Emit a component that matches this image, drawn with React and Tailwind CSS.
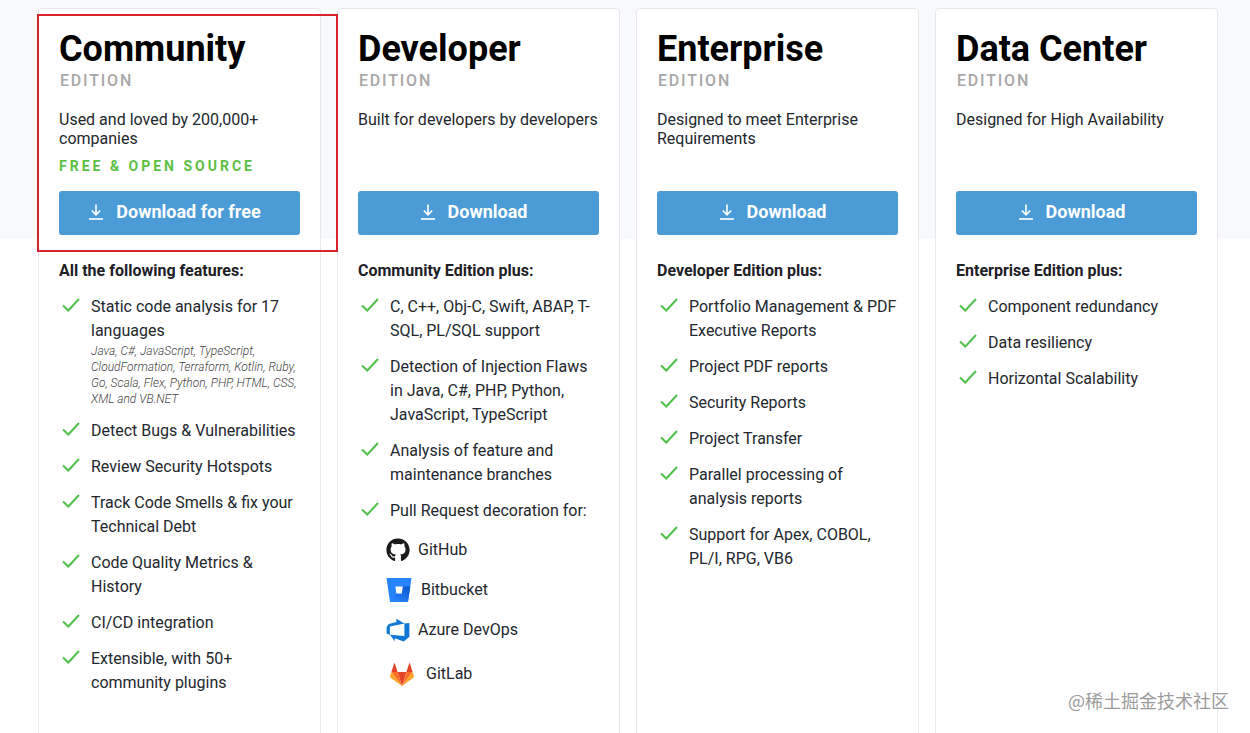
import React from 'react';
import { FaGithub } from 'react-icons/fa';
import { VscAzureDevops } from 'react-icons/vsc';

const CheckIcon = () => (
  <svg viewBox="0 0 18 14" className="absolute left-[3px] top-[3px] w-[18px] h-[14px]" fill="none">
    <path d="M1 7.5 L6.3 12.5 L17 1" stroke="#4fc04a" strokeWidth="2" />
  </svg>
);

const DownloadIcon = () => (
  <svg viewBox="0 0 16 16" className="w-[16px] h-[16px]" fill="none" stroke="#fff" strokeWidth="1.6">
    <path d="M8 0.5 V10.5 M3.8 6.5 L8 10.8 L12.2 6.5" />
    <path d="M1 15 H15" />
  </svg>
);

const BitbucketLogo = () => (
  <svg viewBox="0 0 26 24" className="w-[26px] h-[24px]">
    <defs>
      <linearGradient id="bb" x1="1" y1="0" x2="0.3" y2="1">
        <stop offset="0" stopColor="#0a52cc" />
        <stop offset="1" stopColor="#2684ff" />
      </linearGradient>
    </defs>
    <path d="M0.5 0 H25.5 L22 24 H4 Z" fill="#2684ff" />
    <path d="M24.3 8.5 H16.8 L15.6 16 H10.3 L4.2 23.6 H22 Z" fill="url(#bb)" />
    <path d="M9.3 8.5 H16.8 L15.8 15.5 H10.4 Z" fill="#fff" />
  </svg>
);

const GitlabLogo = () => (
  <svg viewBox="0 0 24 23" className="w-[24px] h-[23px]">
    <path d="M12 23 L16.4 9 H7.6 Z" fill="#e24329" />
    <path d="M12 23 L7.6 9 H1.4 Z" fill="#fc6d26" />
    <path d="M1.4 9 L0.1 13.2 C-0.1 13.8 0.1 14.4 0.6 14.7 L12 23 Z" fill="#fca326" />
    <path d="M1.4 9 H7.6 L4.9 0.6 C4.8 0.2 4.2 0.2 4.1 0.6 Z" fill="#e24329" />
    <path d="M12 23 L16.4 9 H22.6 Z" fill="#fc6d26" />
    <path d="M22.6 9 L23.9 13.2 C24.1 13.8 23.9 14.4 23.4 14.7 L12 23 Z" fill="#fca326" />
    <path d="M22.6 9 H16.4 L19.1 0.6 C19.2 0.2 19.8 0.2 19.9 0.6 Z" fill="#e24329" />
  </svg>
);

const Feature = ({ children, note }) => (
  <li className="relative pl-[32px]">
    <CheckIcon />
    {children}
    {note && (
      <p className="italic font-light text-[12px] leading-[16px] text-[#444] -mr-[4px]">{note}</p>
    )}
  </li>
);

const editions = [
  {
    name: 'Community',
    desc: 'Used and loved by 200,000+ companies',
    free: true,
    button: 'Download for free',
    plus: 'All the following features:',
    features: [
      {
        text: 'Static code analysis for 17 languages',
        note: 'Java, C#, JavaScript, TypeScript, CloudFormation, Terraform, Kotlin, Ruby, Go, Scala, Flex, Python, PHP, HTML, CSS, XML and VB.NET',
      },
      { text: 'Detect Bugs & Vulnerabilities' },
      { text: 'Review Security Hotspots' },
      { text: 'Track Code Smells & fix your Technical Debt' },
      { text: 'Code Quality Metrics & History' },
      { text: 'CI/CD integration' },
      { text: 'Extensible, with 50+ community plugins' },
    ],
  },
  {
    name: 'Developer',
    desc: 'Built for developers by developers',
    button: 'Download',
    plus: 'Community Edition plus:',
    features: [
      { text: 'C, C++, Obj-C, Swift, ABAP, T-SQL, PL/SQL support' },
      { text: 'Detection of Injection Flaws in Java, C#, PHP, Python, JavaScript, TypeScript' },
      { text: 'Analysis of feature and maintenance branches' },
      { text: 'Pull Request decoration for:' },
    ],
    integrations: true,
  },
  {
    name: 'Enterprise',
    desc: 'Designed to meet Enterprise Requirements',
    button: 'Download',
    plus: 'Developer Edition plus:',
    features: [
      { text: 'Portfolio Management & PDF Executive Reports' },
      { text: 'Project PDF reports' },
      { text: 'Security Reports' },
      { text: 'Project Transfer' },
      { text: 'Parallel processing of analysis reports' },
      { text: 'Support for Apex, COBOL, PL/I, RPG, VB6' },
    ],
  },
  {
    name: 'Data Center',
    desc: 'Designed for High Availability',
    button: 'Download',
    plus: 'Enterprise Edition plus:',
    features: [
      { text: 'Component redundancy' },
      { text: 'Data resiliency' },
      { text: 'Horizontal Scalability' },
    ],
  },
];

const Integrations = () => (
  <div className="text-[16px] leading-[24px]">
    <div className="flex items-center h-[24px] mt-[15px] ml-[28px]">
      <FaGithub className="w-[24px] h-[24px] text-[#1b1b1b]" />
      <span className="ml-[8px]">GitHub</span>
    </div>
    <div className="flex items-center h-[24px] mt-[16px] ml-[28px]">
      <BitbucketLogo />
      <span className="ml-[9px]">Bitbucket</span>
    </div>
    <div className="flex items-center h-[24px] mt-[16px] ml-[27px]">
      <VscAzureDevops className="w-[26px] h-[26px] text-[#0f78d4]" />
      <span className="ml-[7px]">Azure DevOps</span>
    </div>
    <div className="flex items-center h-[24px] mt-[20px] ml-[32px]">
      <GitlabLogo />
      <span className="ml-[12px]">GitLab</span>
    </div>
  </div>
);

const EditionCard = ({ edition }) => (
  <div className="w-[283px] h-[900px] shrink-0 bg-white border border-[#e6e8ee] rounded-[4px] px-[20px] pt-[20px] text-[#23272e]">
    <h2 className="text-[36px] leading-[40px] font-bold text-black">{edition.name}</h2>
    <div className="ml-[1px] text-[16px] leading-[24px] font-medium tracking-[1.8px] text-[#a8a8a8]">EDITION</div>
    <div className="h-[98px] pt-[17px]">
      <p className="text-[16px] leading-[19px]">{edition.desc}</p>
      {edition.free && (
        <p className="mt-[9px] text-[14px] leading-[19px] font-bold tracking-[3px] text-[#5cc043]">FREE &amp; OPEN SOURCE</p>
      )}
    </div>
    <button className="w-full h-[44px] pr-[10px] pb-[3px] flex items-center justify-center gap-[12px] bg-[#4b9bd7] rounded-[3px] text-white text-[18px] font-bold">
      <DownloadIcon />
      {edition.button}
    </button>
    <p className="mt-[26px] text-[16px] leading-[20px] font-bold text-[#1d2026]">{edition.plus}</p>
    <ul className="mt-[14px] flex flex-col gap-[12px] text-[16px] leading-[24px]">
      {edition.features.map((f) => (
        <Feature key={f.text} note={f.note}>{f.text}</Feature>
      ))}
    </ul>
    {edition.integrations && <Integrations />}
  </div>
);

export default function App() {
  return (
    <div className="relative h-[733px] w-[1250px] overflow-hidden bg-[linear-gradient(#f8f9fb_239px,#ffffff_239px)] font-['Roboto',sans-serif]">
      <div className="flex gap-[16px] pl-[38px] pt-[8px]">
        {editions.map((e) => (
          <EditionCard key={e.name} edition={e} />
        ))}
      </div>

      {/* red highlight drawn over the first card */}
      <div className="absolute left-[37px] top-[14px] w-[301px] h-[238px] border-2 border-[#d8232a]" />

      {/* watermark */}
      <div className="absolute left-[1068px] top-[688px] text-[18px] leading-[24px] text-[#9b9b9b] font-['Noto_Sans_CJK_SC',sans-serif]">
        @稀土掘金技术社区
      </div>
    </div>
  );
}
